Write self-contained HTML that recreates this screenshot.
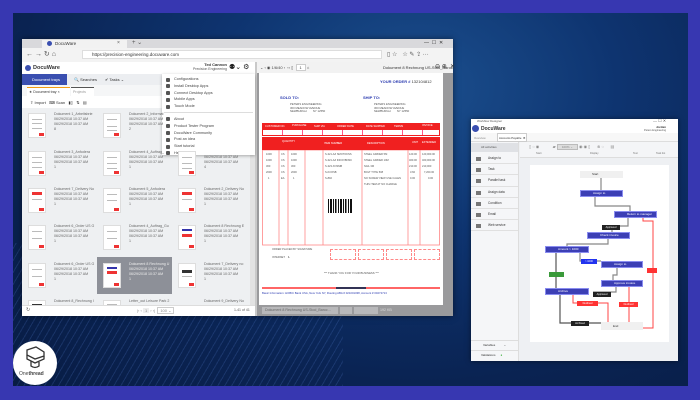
<!DOCTYPE html>
<html><head><meta charset="utf-8"><style>
*{margin:0;padding:0;box-sizing:border-box}
body{width:700px;height:400px;overflow:hidden;background:#3737b1;font-family:"Liberation Sans",sans-serif;position:relative}
.a{position:absolute}
#bg{left:13px;top:13px;width:675px;height:373px;overflow:hidden;
background:radial-gradient(ellipse at 60% 20%,#1b4f8e 0%,#0e3470 35%,#0a2352 70%,#081c44 100%)}
#stripes{left:0;top:230px;width:330px;height:143px;background:repeating-linear-gradient(-60deg,rgba(80,120,200,.22) 0 1px,transparent 1px 6px)}
.t{font-size:4px;color:#555;white-space:nowrap}
.th{position:absolute;width:18px;height:25px;background:#fff;border:1px solid #ddd}
.th:after{content:"";position:absolute;right:1px;bottom:1px;width:5px;height:3px;background:#e33}
.th i{position:absolute;left:3px;right:3px;height:1px;background:#bbb}
.cap{position:absolute;font-size:3.6px;color:#666;line-height:5px;white-space:nowrap}
.mi{font-size:3.8px;color:#444;height:6.8px;line-height:6.8px;padding-left:12px;position:relative;white-space:nowrap}
.mi:before{content:"";position:absolute;left:4px;top:1.5px;width:4px;height:4px;background:#555;border-radius:1px}
.node{position:absolute;background:#3c3fb5;height:7px;border:1px solid #8a8df0;font-size:3px;color:#fff;line-height:5px;padding-left:12px}
.lab{position:absolute;height:5px;font-size:2.5px;color:#fff;line-height:5px;text-align:center}
.side{height:11.2px;border-bottom:1px solid #e0e0e0;font-size:3.2px;color:#333;line-height:11px;padding-left:17px;position:relative}
.side:before{content:"";position:absolute;left:5px;top:4px;width:5px;height:4px;background:#777}
</style></head><body>
<div id="bg" class="a"><div id="stripes" class="a"></div></div>

<!-- Browser window -->
<div class="a" style="left:22px;top:39px;width:431px;height:277px;background:#fff;box-shadow:0 0 6px rgba(0,0,0,.5)">
 <div class="a" style="left:0;top:0;width:431px;height:9px;background:#d9d9dc"></div>
 <div class="a" style="left:20px;top:1px;width:85px;height:8px;background:#f2f2f2"></div>
 <div class="a t" style="left:33px;top:2px;font-size:4.5px;color:#333">DocuWare</div>
 <div class="a" style="left:25px;top:2px;width:5px;height:5px;border-radius:50%;background:#3a4fb0"></div>
 <div class="a t" style="left:95px;top:1px;font-size:5px">×</div>
 <div class="a t" style="left:110px;top:0px;font-size:6px">+ ⌄</div>
 <div class="a t" style="left:402px;top:1px;font-size:5px;color:#333">—&nbsp; ☐&nbsp; ✕</div>
 <div class="a" style="left:0;top:9px;width:431px;height:14px;background:#f3f3f3"></div>
 <div class="a t" style="left:4px;top:11px;font-size:7px;color:#555">← → ↻ ⌂</div>
 <div class="a" style="left:60px;top:11px;width:300px;height:9px;background:#fff;border:1px solid #ddd"></div>
 <div class="a t" style="left:70px;top:13px;font-size:4.5px;color:#333">https://precision-engineering.docuware.com</div>
 <div class="a t" style="left:365px;top:12px;font-size:6px;color:#555">▯ ☆ &nbsp; ☆ ✎ ⇪ ···</div>
 <!-- app header -->
 <div class="a" style="left:3px;top:26px;width:6px;height:6px;border-radius:50%;background:#3a4fb0"></div>
 <div class="a t" style="left:11px;top:26px;font-size:5.5px;color:#333;font-weight:bold">DocuWare</div>
 <div class="a t" style="left:160px;top:23px;font-size:4px;color:#333;font-weight:bold;text-align:right;width:45px">Ted Cannon</div>
 <div class="a t" style="left:150px;top:28px;font-size:3.5px;text-align:right;width:55px">Precision Engineering</div>
 <div class="a t" style="left:207px;top:24px;font-size:7px;color:#222">⚉⌄ ⚙</div>
 <div class="a" style="left:0;top:35px;width:234px;height:11px;background:#eceef1"></div>
 <div class="a" style="left:0;top:35px;width:45px;height:11px;background:#3a4fb0"></div>
 <div class="a t" style="left:10px;top:38px;color:#fff">Document trays</div>
 <div class="a t" style="left:52px;top:38px;color:#333">🔍 Searches</div>
 <div class="a t" style="left:83px;top:38px;color:#333">✔ Tasks ⌄</div>
 <div class="a" style="left:0;top:46px;width:234px;height:11px;background:#f5f6f7"></div>
 <div class="a" style="left:5px;top:48px;width:43px;height:9px;background:#fff;border-top:1px solid #f39c12"></div>
 <div class="a t" style="left:7px;top:51px;font-size:3.6px;color:#333">★ Document tray ×</div>
 <div class="a" style="left:49px;top:48px;width:23px;height:9px;background:#fff;border-top:1px solid #555"></div>
 <div class="a t" style="left:51px;top:51px;font-size:3.6px;color:#999">Projects</div>
 <div class="a" style="left:0;top:57px;width:234px;height:12px;background:#fff"></div>
 <div class="a t" style="left:8px;top:61px;color:#333">⇪ Import &nbsp; ⌨ Scan &nbsp; ▮▯ &nbsp; ⇅ &nbsp; ▤</div>
 <div class="a" style="left:0;top:69px;width:233px;height:197px;background:#eef0f2;overflow:hidden">
  <div class="a" style="left:75px;top:149px;width:75px;height:37px;background:#8d9098"></div>
 </div>
 <div class="a" style="left:228px;top:69px;width:5px;height:197px;background:#e2e2e2"></div>
 <div class="a" style="left:233px;top:23px;width:2px;height:254px;background:#c9c9c9"></div>
 <div class="a" style="left:0;top:266px;width:233px;height:11px;background:#fff;border-top:1px solid #ddd"></div>
 <div class="a t" style="left:4px;top:268px;font-size:5px">↻</div>
 <div class="a t" style="left:115px;top:269px;color:#888">|‹ ‹ <span style="background:#eee;padding:0 2px">1</span> › ›| &nbsp;<span style="border:1px solid #ccc;padding:0 2px">100 ⌄</span></div>
 <div class="a t" style="left:212px;top:269px;font-size:3.5px">1-41 of 41</div>

 <!-- dropdown menu -->
 <div class="a" style="left:140px;top:35px;width:93px;height:81px;background:#fff;box-shadow:0 1px 3px rgba(0,0,0,.3);padding-top:2px">
  <div class="mi">Configurations</div><div class="mi">Install Desktop Apps</div><div class="mi">Connect Desktop Apps</div><div class="mi">Mobile Apps</div><div class="mi">Touch Mode</div>
  <div style="border-top:1px solid #ddd;margin:2px 2px 3px"></div>
  <div class="mi">About</div><div class="mi">Product Tester Program</div><div class="mi">DocuWare Community</div><div class="mi">Post an idea</div><div class="mi">Start tutorial</div><div class="mi">Help</div>
 </div>

 <!-- doc viewer -->
 <div class="a" style="left:235px;top:23px;width:196px;height:254px;background:#9a9a9c"></div>
 <div class="a" style="left:235px;top:23px;width:196px;height:11px;background:#f2f2f2"></div>
 <div class="a t" style="left:238px;top:26px;color:#444">⌄ ‹ ◉ 1/6/40 › &nbsp;‹‹ ▯ &nbsp;<span style="background:#fff;border:1px solid #ccc;padding:0 3px">1</span> ⌂</div>
 <div class="a t" style="left:361px;top:26px;font-size:4px;color:#333">Dokument 8 Rechnung US-Stod_Baroc</div>
 <div class="a t" style="left:413px;top:24px;font-size:6px;color:#333">⊖ ⊕ &nbsp;✕</div>
 <div class="a" style="left:237px;top:34px;width:184px;height:232px;background:#fff"></div>
 <div class="a" style="left:235px;top:266px;width:196px;height:11px;background:#9a9a9c"></div>
 <div class="a" style="left:240px;top:268px;width:76px;height:7px;background:#b8b8ba"></div>
 <div class="a t" style="left:243px;top:269px;font-size:3.6px;color:#666">Dokument 8 Rechnung US-Stod_Baroc...</div>
 <div class="a" style="left:318px;top:268px;width:12px;height:7px;background:#b8b8ba"></div>
 <div class="a" style="left:332px;top:268px;width:24px;height:7px;background:#b8b8ba"></div>
 <div class="a t" style="left:358px;top:269px;font-size:3.6px;color:#ddd">192 KB</div>
</div>

<!-- thumbnails -->
<div class="a" style="left:0;top:0;width:255px;height:305px;overflow:hidden">
<div class="th" style="left:28px;top:113px"><i style="top:5px"></i><i style="top:9px"></i><i style="top:14px"></i></div>
<div class="th" style="left:103px;top:113px"><i style="top:5px"></i><i style="top:12px"></i><i style="top:16px"></i></div>
<div class="th" style="left:28px;top:151px"><i style="top:5px"></i><i style="top:10px"></i><i style="top:15px"></i></div>
<div class="th" style="left:103px;top:151px"><i style="top:5px"></i><i style="top:11px"></i><i style="top:16px"></i></div>
<div class="th" style="left:178px;top:151px"><i style="top:5px"></i><i style="top:11px"></i><i style="top:16px"></i></div>
<div class="th" style="left:28px;top:188px"><i style="top:3px;height:3px;background:#e33"></i><i style="top:10px"></i></div>
<div class="th" style="left:103px;top:188px"><i style="top:5px"></i><i style="top:11px"></i></div>
<div class="th" style="left:178px;top:188px"><i style="top:3px;height:3px;background:#e33"></i><i style="top:10px"></i></div>
<div class="th" style="left:28px;top:225px"><i style="top:5px"></i><i style="top:12px"></i></div>
<div class="th" style="left:103px;top:225px"><i style="top:5px"></i><i style="top:12px"></i></div>
<div class="th" style="left:178px;top:225px"><i style="top:3px;height:2px;background:#33a"></i><i style="top:8px;height:3px;background:#e33"></i></div>
<div class="th" style="left:28px;top:263px"><i style="top:5px"></i><i style="top:12px"></i></div>
<div class="th" style="left:103px;top:263px"><i style="top:3px;height:2px;background:#33a"></i><i style="top:7px;height:3px;background:#e33"></i></div>
<div class="th" style="left:178px;top:263px"><i style="top:6px;height:3px;background:#333"></i><i style="top:12px"></i></div>
<div class="th" style="left:28px;top:300px"><i style="top:3px;height:2px;background:#333"></i></div>
<div class="th" style="left:103px;top:300px"><i style="top:3px"></i></div>
<div class="cap" style="left:54px;top:112px">Dokument 1_Arbeitsbrie<br>06/29/2018 10:37 AM<br>06/29/2018 10:37 AM<br>8</div>
<div class="cap" style="left:129px;top:112px">Dokument 2_Informat<br>06/29/2018 10:37 AM<br>06/29/2018 10:37 AM<br>2</div>
<div class="cap" style="left:54px;top:150px">Dokument 3_Anfodera<br>06/29/2018 10:37 AM<br>06/29/2018 10:37 AM<br>1</div>
<div class="cap" style="left:129px;top:150px">Dokument 4_Auftrag_<br>06/29/2018 10:37 AM<br>06/29/2018 10:37 AM<br>1</div>
<div class="cap" style="left:204px;top:155px">06/29/2018 10:37 AM<br>06/29/2018 10:37 AM<br>4</div>
<div class="cap" style="left:54px;top:187px">Dokument 7_Delivery No<br>06/29/2018 10:37 AM<br>06/29/2018 10:37 AM<br>1</div>
<div class="cap" style="left:129px;top:187px">Dokument 5_Anfodera<br>06/29/2018 10:37 AM<br>06/29/2018 10:37 AM<br>1</div>
<div class="cap" style="left:204px;top:187px">Dokument 2_Delivery No<br>06/29/2018 10:37 AM<br>06/29/2018 10:37 AM<br>1</div>
<div class="cap" style="left:54px;top:224px">Dokument 6_Order US G<br>06/29/2018 10:37 AM<br>06/29/2018 10:37 AM<br>1</div>
<div class="cap" style="left:129px;top:224px">Dokument 4_Auftrag_Gu<br>06/29/2018 10:37 AM<br>06/29/2018 10:37 AM<br>1</div>
<div class="cap" style="left:204px;top:224px">Dokument 8 Rechnung E<br>06/29/2018 10:37 AM<br>06/29/2018 10:37 AM<br>1</div>
<div class="cap" style="left:54px;top:262px">Dokument 6_Order US G<br>06/29/2018 10:37 AM<br>06/29/2018 10:37 AM<br>1</div>
<div class="cap" style="left:129px;top:262px;color:#eee">Dokument 8 Rechnung U<br>06/29/2018 10:37 AM<br>06/29/2018 10:37 AM<br>1</div>
<div class="cap" style="left:204px;top:262px">Dokument 7_Delivery no<br>06/29/2018 10:37 AM<br>06/29/2018 10:37 AM<br>1</div>
<div class="cap" style="left:54px;top:299px">Dokument 8_Rechnung I</div>
<div class="cap" style="left:129px;top:299px">Letter_out Leisure Park 2</div>
<div class="cap" style="left:204px;top:299px">Dokument 9_Delivery No</div>
</div>

<!-- invoice -->
<div class="a t" style="left:380px;top:79px;font-size:4px;color:#2b3bb0;font-weight:bold">YOUR ORDER # <span style="color:#333;font-weight:normal">132104812</span></div>
<div class="a t" style="left:280px;top:95px;font-size:4px;color:#2b3bb0;font-weight:bold">SOLD TO:</div>
<div class="a t" style="left:363px;top:95px;font-size:4px;color:#2b3bb0;font-weight:bold">SHIP TO:</div>
<div class="a" style="left:290px;top:103px;font-size:2.8px;color:#555;line-height:3.5px">PETERS ENGINEERING<br>300 MEADOW AVENUE<br>NEWBURGH &nbsp;&nbsp;&nbsp;&nbsp;&nbsp;&nbsp; NY 12550</div>
<div class="a" style="left:374px;top:103px;font-size:2.8px;color:#555;line-height:3.5px">PETERS ENGINEERING<br>300 MEADOW AVENUE<br>NEWBURGH &nbsp;&nbsp;&nbsp;&nbsp;&nbsp;&nbsp; NY 12550</div>
<div class="a" style="left:262px;top:123px;width:178px;height:6px;background:#f02020"></div>
<div class="a" style="left:262px;top:129px;width:178px;height:7px;border:1px solid #f02020;background:repeating-linear-gradient(90deg,#fff 0 19px,#f58 19px 20px)"></div>
<div class="a" style="left:262px;top:137px;width:178px;height:13px;background:#f02020"></div>
<div class="a" style="left:262px;top:123px;width:178px;height:27px;font-size:2.6px;color:#fff;white-space:nowrap">
 <span class="a" style="left:3px;top:2px">CUSTOMER NO.</span><span class="a" style="left:30px;top:1px">PURCHASE</span><span class="a" style="left:52px;top:2px">SHIP VIA</span><span class="a" style="left:75px;top:2px">ORDER DATE</span><span class="a" style="left:104px;top:2px">DATE SHIPPED</span><span class="a" style="left:132px;top:2px">TERMS</span><span class="a" style="left:160px;top:1px">INVOICE</span>
 <span class="a" style="left:20px;top:17px">QUANTITY</span><span class="a" style="left:62px;top:19px">ITEM NUMBER</span><span class="a" style="left:105px;top:19px">DESCRIPTION</span><span class="a" style="left:150px;top:18px">UNIT</span><span class="a" style="left:160px;top:18px">EXTENDED</span>
</div>
<svg class="a" style="left:262px;top:150px" width="180" height="96">
 <g stroke="#f88" stroke-width=".8" fill="none">
  <rect x=".5" y="0" width="177" height="95"/>
  <line x1="17" y1="0" x2="17" y2="95"/><line x1="26" y1="0" x2="26" y2="95"/><line x1="43" y1="0" x2="43" y2="95"/><line x1="61" y1="0" x2="61" y2="95"/><line x1="100" y1="0" x2="100" y2="95"/><line x1="146" y1="0" x2="146" y2="95"/><line x1="158" y1="0" x2="158" y2="95"/>
 </g>
 <g font-size="2.6" fill="#555" font-family="Liberation Sans">
  <text x="4" y="5">1000</text><text x="4" y="11">1000</text><text x="4" y="17">300</text><text x="4" y="23">2000</text><text x="6" y="29">1</text>
  <text x="19" y="5">CS</text><text x="19" y="11">CS</text><text x="19" y="17">CS</text><text x="19" y="23">CS</text><text x="19" y="29">EA</text>
  <text x="29" y="5">1000</text><text x="29" y="11">1000</text><text x="29" y="17">300</text><text x="29" y="23">2000</text><text x="31" y="29">1</text>
  <text x="63" y="5">S-321-AZ SMOTOKNS</text><text x="63" y="11">S-321-AZ INKOXBNSK</text><text x="63" y="17">S-323-XOSMB</text><text x="63" y="23">S-KOXSB</text><text x="63" y="29">S-892</text>
  <text x="102" y="5">STEEL GIRDER 5M</text><text x="102" y="11">STEEL GIRDER 10M</text><text x="102" y="17">NAIL 3M</text><text x="102" y="23">BOLT TYPE 508</text><text x="102" y="29">NO SCREW VIEW USE CALEN</text><text x="102" y="35">THIS ITEM AT NO CHARGE</text>
  <text x="147" y="5">120.00</text><text x="147" y="11">460.00</text><text x="147" y="17">210.00</text><text x="148" y="23">3.60</text><text x="148" y="29">0.00</text>
  <text x="160" y="5">120,000.00</text><text x="160" y="11">460,000.00</text><text x="160" y="17">210,000</text><text x="162" y="23">7,200.00</text><text x="166" y="29">0.00</text>
 </g>
 <g fill="#111"><rect x="66" y="49" width="1" height="14"/><rect x="68" y="49" width="2" height="14"/><rect x="71" y="49" width="1" height="14"/><rect x="73" y="49" width="1.5" height="14"/><rect x="76" y="49" width="1" height="14"/><rect x="78" y="49" width="2" height="14"/><rect x="81" y="49" width="1" height="14"/><rect x="83" y="49" width="1.5" height="14"/><rect x="86" y="49" width="1" height="14"/><rect x="88" y="49" width="2" height="14"/></g>
</svg>
<div class="a" style="left:272px;top:246px;font-size:2.6px;color:#555;line-height:8px">ORDER PLACED BY SIGNATURE<br>INTERNET &nbsp;&nbsp; IL</div>
<div class="a" style="left:330px;top:249px;width:26px;height:11px;border:1px dashed #f88"></div>
<div class="a" style="left:358px;top:249px;width:26px;height:11px;border:1px dashed #f88"></div>
<div class="a" style="left:386px;top:249px;width:26px;height:11px;border:1px dashed #f88"></div>
<div class="a" style="left:414px;top:249px;width:26px;height:11px;border:1px dashed #f88"></div>
<div class="a t" style="left:324px;top:271px;font-size:2.8px">*** THANK YOU FOR YOUR BUSINESS ***</div>
<div class="a" style="left:262px;top:287px;width:178px;height:2px;background:#f66"></div>
<div class="a" style="left:336px;top:287px;width:30px;height:2px;background:#335"></div>
<div class="a t" style="left:262px;top:291px;font-size:2.8px;color:#2b3bb0">Basic Information: HOBIC Bank USA, New York NY, Routing ABA # 021001038, Account # 00272713</div>

<!-- workflow designer -->
<div class="a" style="left:471px;top:119px;width:207px;height:242px;background:#eef0f3;box-shadow:0 0 5px rgba(0,0,0,.5);overflow:hidden">
 <div class="a" style="left:0;top:0;width:207px;height:14px;background:#fff"></div>
 <div class="a t" style="left:6px;top:0;font-size:3px">Workflow Designer</div>
 <div class="a t" style="left:182px;top:-1px;font-size:4px">— ☐ ✕</div>
 <div class="a" style="left:1px;top:6px;width:7px;height:7px;border-radius:50%;background:#3a4fb0"></div>
 <div class="a t" style="left:10px;top:7px;font-size:5px;color:#333;font-weight:bold">DocuWare</div>
 <div class="a t" style="left:185px;top:6px;font-size:3px;color:#333;font-weight:bold">Jordan</div>
 <div class="a t" style="left:173px;top:10px;font-size:2.6px">Peters Engineering</div>
 <div class="a" style="left:0;top:14px;width:207px;height:9px;background:#f7f7f7;border-bottom:1px solid #ddd"></div>
 <div class="a" style="left:26px;top:14px;width:30px;height:9px;background:#fff;border:1px solid #ccc"></div>
 <div class="a t" style="left:3px;top:17px;font-size:2.8px;color:#888">Overview</div>
 <div class="a t" style="left:28px;top:17px;font-size:2.8px;color:#333">Accounts Payable &nbsp;<b>✕</b></div>
 <div class="a" style="left:0;top:23px;width:48px;height:219px;background:#f5f6f8;border-right:1px solid #ddd"></div>
 <div class="a" style="left:0;top:24px;width:47px;height:9px;background:#dfe1e5"></div>
 <div class="a t" style="left:10px;top:26px;font-size:3px">All activities</div>
 <div class="a" style="left:0;top:34px;width:47px">
  <div class="side">Assign to</div><div class="side">Task</div><div class="side">Parallel task</div><div class="side">Assign data</div><div class="side">Condition</div><div class="side">Email</div><div class="side">Web service</div>
 </div>
 <div class="a" style="left:0;top:221px;width:47px;height:9px;border-top:1px solid #ddd;font-size:3px;color:#333;line-height:8px;padding-left:12px">Variables &nbsp;&nbsp;&nbsp;&nbsp;&nbsp;&nbsp;&nbsp;&nbsp; ⌄</div>
 <div class="a" style="left:0;top:231px;width:47px;height:9px;border-top:1px solid #ddd;font-size:3px;color:#333;line-height:8px;padding-left:10px">Validations &nbsp;&nbsp;&nbsp;&nbsp; <span style="color:#3a3">●</span></div>
 <div class="a" style="left:49px;top:23px;width:158px;height:16px;background:#f4f5f7;border-bottom:1px solid #ddd"></div>
 <div class="a t" style="left:58px;top:25px;font-size:4px;color:#888">▯ ◌ ◉ &nbsp;&nbsp;&nbsp;&nbsp;&nbsp;&nbsp;&nbsp;&nbsp;&nbsp;&nbsp; ▰ <span style="border:1px solid #bbb;background:#ddd;padding:0 4px;font-size:3px">100% ⌄</span> ◉ ◉ ▯ &nbsp;&nbsp;&nbsp;&nbsp; ⊗ ◌ &nbsp;&nbsp;&nbsp;&nbsp; ▤</div>
 <div class="a t" style="left:65px;top:33px;font-size:2.6px;color:#777">Start</div>
 <div class="a t" style="left:119px;top:33px;font-size:2.6px;color:#777">Display</div>
 <div class="a t" style="left:162px;top:33px;font-size:2.6px;color:#777">Test</div>
 <div class="a t" style="left:185px;top:33px;font-size:2.6px;color:#777">Task list</div>
 <div class="a" style="left:59px;top:46px;width:139px;height:177px;background:#fff"></div>
</div>
<svg class="a" style="left:0;top:0" width="700" height="400" fill="none">
 <g stroke="#888" stroke-width="1.2">
  <polyline points="601,178 601,190"/>
  <polyline points="595,197 595,206 630,206 630,211"/>
  <polyline points="628,218 628,226 612,226 612,232"/>
  <polyline points="608,239 608,244 567,244 567,246"/>
  <polyline points="580,253 580,261 601,261"/>
  <polyline points="617,267 617,275 613,275 613,280"/>
  <polyline points="616,287 616,292 593,292"/>
 </g>
 <g stroke="#555" stroke-width="1.2">
  <polyline points="556,253 556,288"/>
  <polyline points="560,295 560,323 601,323"/>
 </g>
 <g stroke="#f44" stroke-width="1">
  <polyline points="643,218 643,221 653,221 653,328 643,328"/>
  <polyline points="573,295 573,303 608,303 608,322"/>
  <polyline points="629,287 629,322"/>
 </g>
</svg>
<div class="a" style="left:580px;top:171px;width:43px;height:7px;background:#f0f0f0;font-size:3px;line-height:7px;padding-left:12px;color:#333">Start</div>
<div class="node" style="left:580px;top:190px;width:43px">Assign to</div>
<div class="node" style="left:614px;top:211px;width:43px">Return to manager</div>
<div class="node" style="left:587px;top:232px;width:43px">Check invoice</div>
<div class="node" style="left:545px;top:246px;width:44px">Amount &gt; 1000</div>
<div class="node" style="left:601px;top:261px;width:42px">Assign to</div>
<div class="node" style="left:601px;top:280px;width:42px">Approve invoice</div>
<div class="node" style="left:545px;top:288px;width:44px">Archive</div>
<div class="a" style="left:601px;top:322px;width:42px;height:8px;background:#f0f0f0;font-size:3px;line-height:8px;padding-left:12px;color:#333">End</div>
<div class="lab" style="left:602px;top:225px;width:18px;background:#222">Approved</div>
<div class="lab" style="left:581px;top:259px;width:16px;background:#2233ee">&gt; 1000</div>
<div class="lab" style="left:549px;top:272px;width:15px;background:#3a9a3a"></div>
<div class="lab" style="left:593px;top:292px;width:18px;background:#222">Approved</div>
<div class="lab" style="left:577px;top:301px;width:21px;background:#f33">Declined</div>
<div class="lab" style="left:619px;top:302px;width:19px;background:#f33">Declined</div>
<div class="lab" style="left:571px;top:321px;width:18px;background:#222">Archived</div>
<div class="lab" style="left:647px;top:268px;width:10px;background:#f33"></div>

<!-- onethread logo -->
<div class="a" style="left:13px;top:341px;width:44px;height:44px;border-radius:50%;background:#fff"></div>
<svg class="a" style="left:24px;top:346px" width="22" height="24" fill="none" stroke="#333" stroke-width="1.3">
 <path d="M3 4 L12 1 L20 6 L20 10 L11 13 L3 9 Z"/><path d="M3 9 L3 13 L11 17 L20 13 L20 10"/><path d="M7 15 L7 20 Q11 23 15 20 L15 16"/>
</svg>
<div class="a" style="left:19px;top:371px;font-size:5px;color:#444">One<b>thread</b></div>
</body></html>
